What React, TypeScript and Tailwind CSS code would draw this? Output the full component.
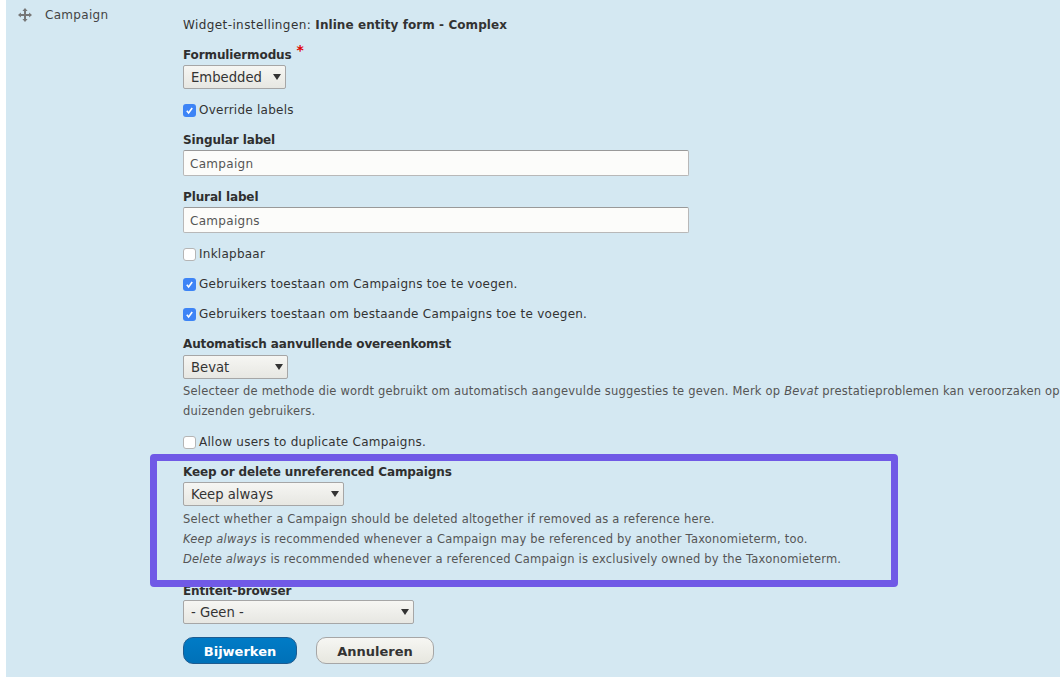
import React from 'react';

const font = "font-['DejaVu_Sans',sans-serif]";

const Check = ({ checked }: { checked?: boolean }) =>
  checked ? (
    <span className="flex h-[13px] w-[13px] shrink-0 items-center justify-center rounded-[3px] bg-[#3d84f6]">
      <svg viewBox="0 0 13 13" className="h-[13px] w-[13px]">
        <path d="M3.8 6.8 L5.6 8.9 L9.2 4" fill="none" stroke="#fff" strokeWidth="1.6" />
      </svg>
    </span>
  ) : (
    <span className="h-[13px] w-[13px] shrink-0 rounded-[3px] border border-[#b5b5b5] bg-white" />
  );

const CheckRow = ({ checked, label, className }: { checked?: boolean; label: string; className: string }) => (
  <div className={`flex h-[16px] items-center gap-[3px] text-[12px] leading-[16px] tracking-[0.25px] text-[#333] ${className}`}>
    <Check checked={checked} />
    <span>{label}</span>
  </div>
);

const Label = ({ children, className }: { children: React.ReactNode; className: string }) => (
  <div className={`h-[16px] pt-[1px] text-[12px] font-bold leading-[16px] tracking-[-0.12px] text-[#2f2f2f] ${className}`}>{children}</div>
);

const Select = ({ value, className }: { value: string; className: string }) => (
  <div className={`flex h-[24px] items-center justify-between rounded-[2px] border border-[#a6a6a6] bg-gradient-to-b from-[#f6f6f3] to-[#e7e7e2] pl-[7px] pr-[4px] text-[13.2px] text-[#333] ${className}`}>
    <span className="pt-[2px]">{value}</span>
    <span className="h-0 w-0 border-x-[4px] border-t-[6px] border-x-transparent border-t-[#333]" />
  </div>
);

const TextInput = ({ value, className }: { value: string; className: string }) => (
  <div className={`flex h-[26px] w-[506px] items-center rounded-[2px] border border-[#b8b8b8] border-t-[#999] bg-[#fcfcfa] pl-[6px] pt-[2px] text-[12px] tracking-[0.3px] text-[#555] ${className}`}>
    {value}
  </div>
);

const Help = ({ children, className }: { children: React.ReactNode; className: string }) => (
  <div className={`whitespace-nowrap text-[11.5px] leading-[20px] tracking-[0.2px] text-[#555] ${className}`}>{children}</div>
);

export default function App() {
  return (
    <div className={`relative h-[677px] w-[1060px] overflow-hidden bg-white pl-[6px] ${font}`}>
      <div className="flex h-full bg-[#d4e8f2]">
        <div className="flex w-[177px] shrink-0 items-start gap-[13px] pl-[12px] pt-[7px] text-[12px] leading-[16px] tracking-[0.3px] text-[#444]">
          <svg viewBox="0 0 14 14" className="mt-[1px] h-[14px] w-[14px]" fill="#777">
            <path d="M7 0 L9.6 2.9 L8 2.9 L8 6 L11.1 6 L11.1 4.4 L14 7 L11.1 9.6 L11.1 8 L8 8 L8 11.1 L9.6 11.1 L7 14 L4.4 11.1 L6 11.1 L6 8 L2.9 8 L2.9 9.6 L0 7 L2.9 4.4 L2.9 6 L6 6 L6 2.9 L4.4 2.9 Z" />
          </svg>
          <span>Campaign</span>
        </div>
        <div className="flex flex-col pt-[17px]">
          <div className="h-[16px] text-[12px] leading-[16px] tracking-[0.4px] text-[#333]">
            Widget-instellingen: <span className="font-bold tracking-[0.07px]">Inline entity form - Complex</span>
          </div>
          <Label className="mt-[12px]">
            Formuliermodus <span className="relative -top-[4px] ml-[1px] text-[14px] text-[#e00000]">*</span>
          </Label>
          <Select value="Embedded" className="mt-[4px] w-[103px]" />
          <CheckRow checked label="Override labels" className="mt-[13px]" />
          <Label className="mt-[13px]">Singular label</Label>
          <TextInput value="Campaign" className="mt-[3px]" />
          <Label className="mt-[12px]">Plural label</Label>
          <TextInput value="Campaigns" className="mt-[3px]" />
          <CheckRow label="Inklapbaar" className="mt-[13px]" />
          <CheckRow checked label="Gebruikers toestaan om Campaigns toe te voegen." className="mt-[14px]" />
          <CheckRow checked label="Gebruikers toestaan om bestaande Campaigns toe te voegen." className="mt-[14px]" />
          <Label className="mt-[13px]">Automatisch aanvullende overeenkomst</Label>
          <Select value="Bevat" className="mt-[4px] w-[105px]" />
          <Help className="mt-[2px]">
            Selecteer de methode die wordt gebruikt om automatisch aangevulde suggesties te geven. Merk op <em>Bevat</em> prestatieproblemen kan veroorzaken op
            <br />
            duizenden gebruikers.
          </Help>
          <CheckRow label="Allow users to duplicate Campaigns." className="mt-[13px]" />
          <Label className="mt-[13px]">Keep or delete unreferenced Campaigns</Label>
          <Select value="Keep always" className="mt-[3px] w-[161px]" />
          <Help className="mt-[3px]">
            Select whether a Campaign should be deleted altogether if removed as a reference here.
            <br />
            <em>Keep always</em> is recommended whenever a Campaign may be referenced by another Taxonomieterm, too.
            <br />
            <em>Delete always</em> is recommended whenever a referenced Campaign is exclusively owned by the Taxonomieterm.
          </Help>
          <Label className="mt-[13px]">Entiteit-browser</Label>
          <Select value="- Geen -" className="mt-[2px] w-[231px]" />
          <div className="mt-[13px] flex gap-[19px]">
            <div className="flex h-[27px] w-[114px] items-center justify-center rounded-[10px] border border-[#1e5c90] bg-gradient-to-b from-[#007bc6] to-[#0071b8] pt-[2px] text-[13px] font-bold text-white">
              Bijwerken
            </div>
            <div className="flex h-[27px] w-[118px] items-center justify-center rounded-[10px] border border-[#a6a6a6] bg-gradient-to-b from-[#f6f6f3] to-[#e7e7df] pt-[2px] text-[13px] font-bold text-[#333]">
              Annuleren
            </div>
          </div>
        </div>
      </div>
      {/* annotation drawn over the form */}
      <div className="absolute left-[150px] top-[454px] h-[133px] w-[748px] rounded-[4px] border-[7px] border-[#7059e6]" />
    </div>
  );
}
